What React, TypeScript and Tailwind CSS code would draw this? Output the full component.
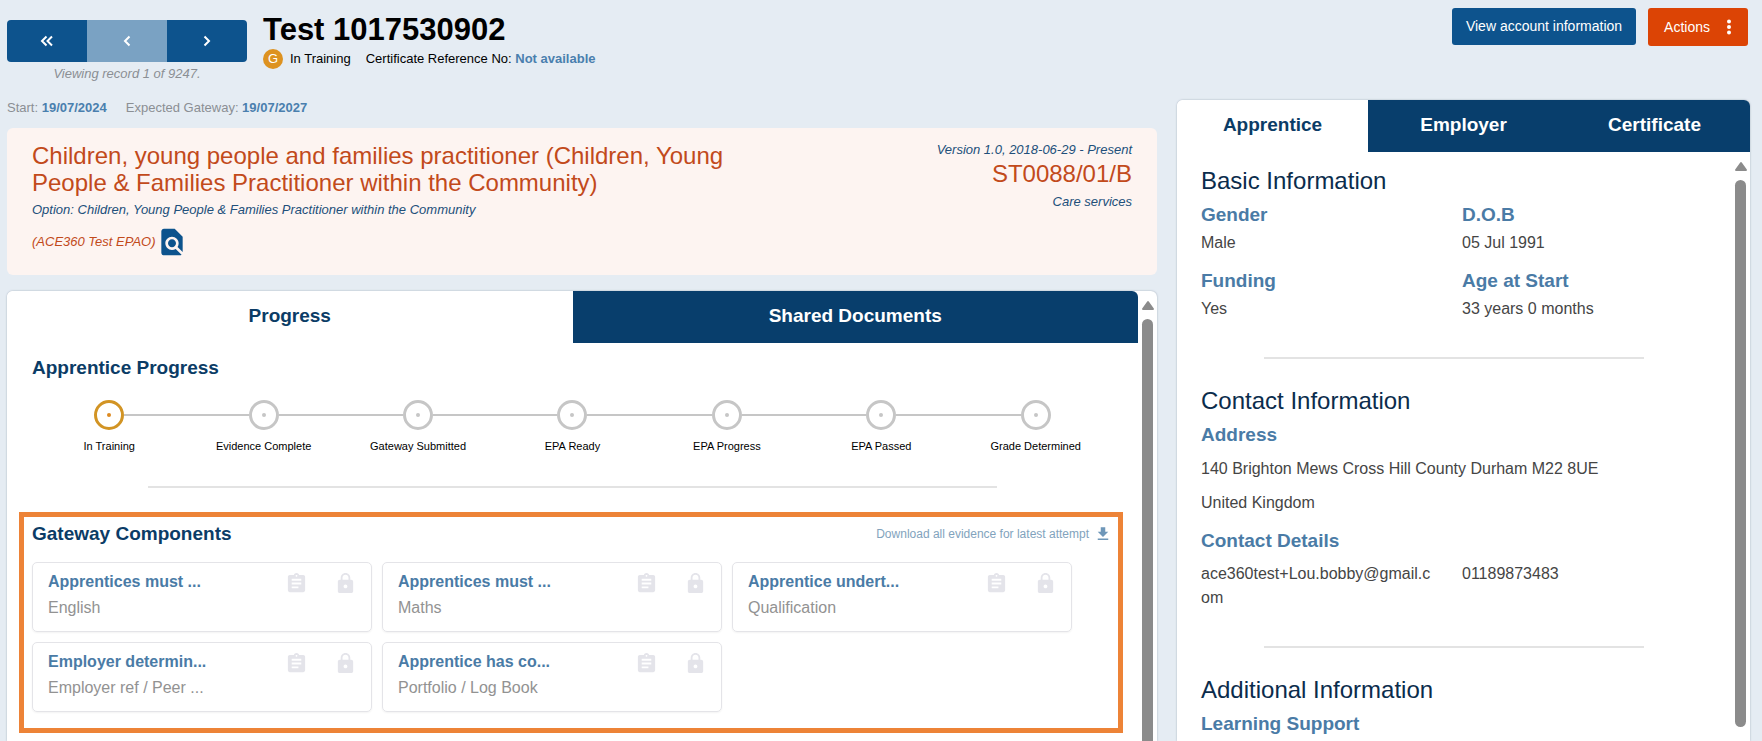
import React from "react";
import clsx from "clsx";
import { MdAssignment, MdFindInPage, MdGetApp, MdLock } from "react-icons/md";

const steps = [
  "In Training",
  "Evidence Complete",
  "Gateway Submitted",
  "EPA Ready",
  "EPA Progress",
  "EPA Passed",
  "Grade Determined",
];

const components = [
  { title: "Apprentices must ...", type: "English" },
  { title: "Apprentices must ...", type: "Maths" },
  { title: "Apprentice undert...", type: "Qualification" },
  { title: "Employer determin...", type: "Employer ref / Peer ..." },
  { title: "Apprentice has co...", type: "Portfolio / Log Book" },
];

interface TabsProps {
  tabs: string[];
  className?: string;
}

// First tab is the open one
const Tabs: React.FC<TabsProps> = ({ tabs, className }) => (
  <div role="tablist" className={clsx("flex h-[52px] shrink-0 overflow-hidden", className)}>
    {tabs.map((tab, index) => (
      <button
        key={tab}
        role="tab"
        aria-selected={index === 0}
        className={clsx(
          "flex-1 pb-[2px] text-[19px] font-bold",
          index === 0 ? "bg-white text-[#0b3c66]" : "bg-[#083e6c] text-white"
        )}
      >
        {tab}
      </button>
    ))}
  </div>
);

const Scrollbar: React.FC<{ className?: string }> = ({ className }) => (
  <div aria-hidden="true" className={clsx("flex w-[19px] shrink-0 flex-col items-center gap-[9px] pt-[10px]", className)}>
    <svg viewBox="0 0 12 9" className="h-[9px] w-3 shrink-0 fill-[#8b8b8b]">
      <path d="M5.2.6a1 1 0 0 1 1.6 0l5 7A.9.9 0 0 1 11 9H1a.9.9 0 0 1-.8-1.4z" />
    </svg>
    <div className={clsx("w-[11px] flex-1 bg-[#8b8b8b]", className ? "rounded-full" : "rounded-t-full")} />
  </div>
);

const NavIcon: React.FC<{ path: string }> = ({ path }) => (
  <svg viewBox="0 0 14 14" className="h-[14px] w-[14px] fill-none stroke-current stroke-2">
    <path d={path} />
  </svg>
);

const RecordNav = () => (
  <div className="w-60">
    <div className="flex h-[42px] overflow-hidden rounded-sm text-white">
      <button aria-label="First record" className="flex flex-1 items-center justify-center bg-[#0d538d]">
        <NavIcon path="M6.5 2.5 2 7l4.500 4.500M12 2.500 7.500 7l4.500 4.500" />
      </button>
      <button aria-label="Previous record" disabled className="flex flex-1 items-center justify-center bg-[#7aa2c3]">
        <NavIcon path="M9.500 2.500 5 7l4.500 4.500" />
      </button>
      <button aria-label="Next record" className="flex flex-1 items-center justify-center bg-[#0d538d]">
        <NavIcon path="M4.500 2.500 9 7l-4.500 4.500" />
      </button>
    </div>
    <p className="mt-[2px] text-center text-[13px] leading-5 text-[#8b8f94] italic">Viewing record 1 of 9247.</p>
  </div>
);

const Header = () => (
  <header className="flex h-[100px] shrink-0 items-start justify-between">
    <div className="flex gap-4">
      <div className="pt-5">
        <RecordNav />
      </div>
      <div className="pt-3">
        <h1 className="text-[31px] leading-9 font-bold">Test 1017530902</h1>
        <div className="flex items-center gap-[7px] text-[13px] leading-[22px]">
          <span className="flex h-5 w-5 items-center justify-center rounded-full bg-[#dd9220] text-white">G</span>
          <span>In Training</span>
          <span className="ml-2">
            Certificate Reference No: <b className="text-[#4a7fae]">Not available</b>
          </span>
        </div>
      </div>
    </div>
    <div className="flex gap-3 pt-2 pr-[2px] text-[14px] text-white">
      <button className="h-[37px] rounded-[3px] bg-[#0d538d] px-[14px]">View account information</button>
      <button className="flex h-[38px] items-center gap-[17px] rounded-[3px] bg-[#dc4405] pr-[17px] pl-4">
        Actions
        <svg viewBox="0 0 4 16" className="h-4 w-1 fill-current">
          <circle cx="2" cy="2.500" r="2" />
          <circle cx="2" cy="8" r="2" />
          <circle cx="2" cy="13.500" r="2" />
        </svg>
      </button>
    </div>
  </header>
);

const CourseCard = () => (
  <section className="flex h-[147px] shrink-0 justify-between rounded-md bg-[#fdf4f1] px-[25px] pt-[14px]">
    <div className="max-w-[720px]">
      <h2 className="text-[24px] leading-[27px] text-[#c24a1b]">
        Children, young people and families practitioner (Children, Young People &amp; Families Practitioner within the
        Community)
      </h2>
      <p className="mt-1 text-[13px] leading-5 text-[#214f7a] italic">
        Option: Children, Young People &amp; Families Practitioner within the Community
      </p>
      <div className="mt-[6px] flex items-center text-[13px] text-[#c24a1b] italic">
        (ACE360 Test EPAO)
        <button aria-label="View standard">
          <MdFindInPage className="h-8 w-8 text-[#0d538d]" />
        </button>
      </div>
    </div>
    <div className="text-right text-[13px] leading-5 text-[#214f7a] italic">
      <p className="-mt-[2px]">Version 1.0, 2018-06-29 - Present</p>
      <p className="text-[24px] leading-[28px] text-[#c24a1b] not-italic">ST0088/01/B</p>
      <p className="mt-1">Care services</p>
    </div>
  </section>
);

const Stepper = () => (
  <ol className="flex">
    {steps.map((step, index) => (
      <li key={step} className="flex-1 text-center">
        <div className="flex items-center">
          <span className={clsx("h-[2px] flex-1", index > 0 && "bg-[#c6c6c6]")} />
          <span
            className={clsx(
              "flex h-[30px] w-[30px] items-center justify-center rounded-full border-3",
              index === 0 ? "border-[#d29424] text-[#dd8a20]" : "border-[#c6c6c6] text-[#c6c6c6]"
            )}
          >
            <span className="h-1 w-1 rounded-full bg-current" />
          </span>
          <span className={clsx("h-[2px] flex-1", index < steps.length - 1 && "bg-[#c6c6c6]")} />
        </div>
        <p className="mt-2 text-[11px] leading-4">{step}</p>
      </li>
    ))}
  </ol>
);

const GatewayComponents = () => (
  <section className="mr-[15px] ml-3 h-[221px] border-5 border-[#ed8337] pr-[6px] pl-2">
    <div className="mt-[5px] flex items-center justify-between">
      <h3 className="text-[19px] leading-6 font-bold text-[#0b3c66]">Gateway Components</h3>
      <a href="#download" className="flex items-center gap-[5px] text-[12px] text-[#82a3bd]">
        Download all evidence for latest attempt
        <MdGetApp className="h-[18px] w-[18px] text-[#6f97b9]" />
      </a>
    </div>
    <div className="mt-4 mr-10 grid grid-cols-3 gap-[10px]">
      {components.map((component, index) => (
        <article
          key={index}
          className="flex h-[70px] justify-between rounded-[5px] border border-[#e4e4e8] pt-[6px] pr-[14px] pl-[15px] shadow-xs"
        >
          <div>
            <h4 className="text-[16px] leading-[26px] font-bold text-[#4a7ba6]">{component.title}</h4>
            <p className="text-[16px] leading-[26px] text-[#929292]">{component.type}</p>
          </div>
          <div className="flex gap-[26px] pt-[3px] text-[#e4e4ea]">
            <MdAssignment className="h-[23px] w-[23px]" />
            <MdLock className="h-[23px] w-[23px]" />
          </div>
        </article>
      ))}
    </div>
  </section>
);

const ProgressPanel = () => (
  <section className="mt-4 flex min-h-0 flex-1 overflow-hidden rounded-t-md bg-white shadow-[0_0_2px_#9aa7b4]">
    <div className="min-w-0 flex-1">
      <Tabs tabs={["Progress", "Shared Documents"]} className="rounded-tr-md" />
      <div className="px-[25px] pt-[13px]">
        <h3 className="text-[19px] leading-6 font-bold text-[#0b3c66]">Apprentice Progress</h3>
        <div className="mt-5">
          <Stepper />
        </div>
      </div>
      <hr className="mx-auto mt-8 mb-6 w-3/4 border-t-2 border-[#e3e3e3]" />
      <GatewayComponents />
    </div>
    <Scrollbar />
  </section>
);

interface FieldProps {
  label: string;
  value: string;
}

const Field: React.FC<FieldProps> = ({ label, value }) => (
  <div>
    <dt className="text-[19px] leading-7 font-bold text-[#4a7ba6]">{label}</dt>
    <dd className="leading-7">{value}</dd>
  </div>
);

const SectionTitle: React.FC<{ children: React.ReactNode }> = ({ children }) => (
  <h2 className="mb-1 text-[24px] leading-8 text-[#0b2c4c]">{children}</h2>
);

const Divider = () => <hr className="mx-auto mt-[34px] mb-[26px] w-3/4 border-t-2 border-[#e3e3e3]" />;

const DetailsPanel = () => (
  <aside className="flex min-h-0 flex-col overflow-hidden rounded-t-md bg-white shadow-[0_0_2px_#9aa7b4]">
    <Tabs tabs={["Apprentice", "Employer", "Certificate"]} />
    <div className="flex min-h-0 flex-1">
      <div className="min-w-0 flex-1 overflow-hidden px-6 pt-[13px] text-[16px] text-[#454545]">
        <SectionTitle>Basic Information</SectionTitle>
        <dl className="grid grid-cols-2 gap-x-4 gap-y-[10px]">
          <Field label="Gender" value="Male" />
          <Field label="D.O.B" value="05 Jul 1991" />
          <Field label="Funding" value="Yes" />
          <Field label="Age at Start" value="33 years 0 months" />
        </dl>
        <Divider />
        <SectionTitle>Contact Information</SectionTitle>
        <h3 className="text-[19px] leading-7 font-bold text-[#4a7ba6]">Address</h3>
        <p className="mt-[3px] leading-[34px]">
          140 Brighton Mews Cross Hill County Durham M22 8UE
          <br />
          United Kingdom
        </p>
        <h3 className="mt-[7px] text-[19px] leading-7 font-bold text-[#4a7ba6]">Contact Details</h3>
        <div className="mt-[7px] mb-9 grid grid-cols-2 gap-x-4 leading-6">
          <p className="pr-2 break-all">ace360test+Lou.bobby@gmail.com</p>
          <p>01189873483</p>
        </div>
        <Divider />
        <SectionTitle>Additional Information</SectionTitle>
        <h3 className="text-[19px] leading-7 font-bold text-[#4a7ba6]">Learning Support</h3>
      </div>
      <Scrollbar className="pb-[14px]" />
    </div>
  </aside>
);

export default function App() {
  return (
    <div className="flex h-screen flex-col overflow-hidden bg-[#e5ecf3] pr-3 pl-[7px] font-['Liberation_Sans',Arial,sans-serif] text-black">
      <Header />
      <main className="grid min-h-0 flex-1 grid-cols-[1150fr_573fr] grid-rows-[minmax(0,1fr)] gap-5">
        <div className="flex min-h-0 flex-col">
          <p className="mb-3 flex gap-[19px] text-[13px] leading-4 text-[#8b8f94]">
            <span>
              Start: <b className="text-[#4a7fae]">19/07/2024</b>
            </span>
            <span>
              Expected Gateway: <b className="text-[#4a7fae]">19/07/2027</b>
            </span>
          </p>
          <CourseCard />
          <ProgressPanel />
        </div>
        <DetailsPanel />
      </main>
    </div>
  );
}
